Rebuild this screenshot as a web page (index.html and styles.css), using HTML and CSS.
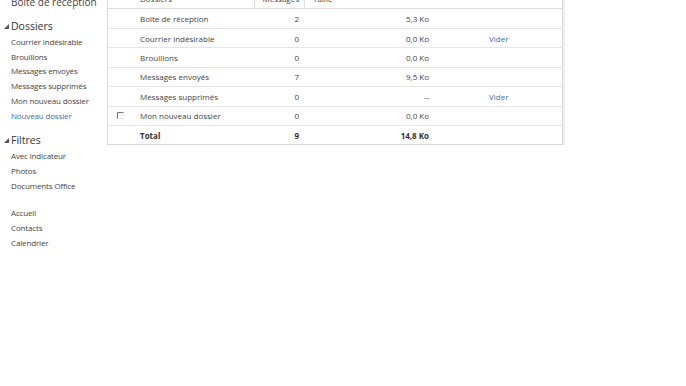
FILE: index.html
```html
<!DOCTYPE html>
<html lang="fr">
<head>
<meta charset="utf-8">
<link rel="stylesheet" href="styles.css">
</head>
<body>
<div class="page">
  <nav class="side">
    <div class="inbox">Boîte de réception</div>
    <div class="group">
      <div class="group-title"><svg class="tri" width="5" height="5" viewBox="0 0 5 5"><polygon points="5,0 5,5 0,5" fill="#555"/></svg>Dossiers</div>
      <a class="item">Courrier indésirable</a>
      <a class="item">Brouillons</a>
      <a class="item">Messages envoyés</a>
      <a class="item">Messages supprimés</a>
      <a class="item">Mon nouveau dossier</a>
      <a class="item link">Nouveau dossier</a>
    </div>
    <div class="group">
      <div class="group-title"><svg class="tri" width="5" height="5" viewBox="0 0 5 5"><polygon points="5,0 5,5 0,5" fill="#555"/></svg>Filtres</div>
      <a class="item">Avec indicateur</a>
      <a class="item">Photos</a>
      <a class="item">Documents Office</a>
    </div>
    <div class="group plain">
      <a class="item">Accueil</a>
      <a class="item">Contacts</a>
      <a class="item">Calendrier</a>
    </div>
  </nav>
  <section class="table">
    <div class="row head">
      <div class="c-chk"></div>
      <div class="c-name">Dossiers</div>
      <div class="c-num sep">Messages</div>
      <div class="c-size sep">Taille</div>
      <div class="c-act"></div>
    </div>
    <div class="row">
      <div class="c-chk"></div><div class="c-name">Boîte de réception</div><div class="c-num">2</div><div class="c-size">5,3 Ko</div><div class="c-act"></div>
    </div>
    <div class="row">
      <div class="c-chk"></div><div class="c-name">Courrier indésirable</div><div class="c-num">0</div><div class="c-size">0,0 Ko</div><div class="c-act"><a class="link">Vider</a></div>
    </div>
    <div class="row">
      <div class="c-chk"></div><div class="c-name">Brouillons</div><div class="c-num">0</div><div class="c-size">0,0 Ko</div><div class="c-act"></div>
    </div>
    <div class="row">
      <div class="c-chk"></div><div class="c-name">Messages envoyés</div><div class="c-num">7</div><div class="c-size">9,5 Ko</div><div class="c-act"></div>
    </div>
    <div class="row">
      <div class="c-chk"></div><div class="c-name">Messages supprimés</div><div class="c-num">0</div><div class="c-size">--</div><div class="c-act"><a class="link">Vider</a></div>
    </div>
    <div class="row">
      <div class="c-chk"><span class="box"></span></div><div class="c-name">Mon nouveau dossier</div><div class="c-num">0</div><div class="c-size">0,0 Ko</div><div class="c-act"></div>
    </div>
    <div class="row total">
      <div class="c-chk"></div><div class="c-name">Total</div><div class="c-num">9</div><div class="c-size">14,8 Ko</div><div class="c-act"></div>
    </div>
  </section>
</div>
</body>
</html>
```
FILE: styles.css
```css
html, body {
  margin: 0;
  padding: 0;
  background: #fff;
}
body {
  font-family: "Open Sans", "DejaVu Sans", sans-serif;
  font-size: 8px;
  color: #444;
  overflow: hidden;
  height: 386px;
}
.page {
  display: flex;
  align-items: flex-start;
}
.side {
  width: 107px;
  flex: none;
  padding-left: 11px;
  box-sizing: border-box;
  margin-top: -5px;
}
.inbox {
  font-size: 10px;
  line-height: 14px;
  color: #444;
}
.group {
  display: flex;
  flex-direction: column;
  margin-top: 10px;
}
.group + .group { margin-top: 10px; }
.group.plain { margin-top: 13px; }
.group-title {
  position: relative;
  font-size: 10.5px;
  line-height: 14px;
  color: #333;
  margin-bottom: 2px;
}
.tri {
  position: absolute;
  left: -7px;
  top: 5px;
}
.item {
  line-height: 14.7px;
  color: #444;
  white-space: nowrap;
  letter-spacing: -0.15px;
}
.link { color: #3a6eb5; }
.table {
  width: 456px;
  box-sizing: border-box;
  border: 1px solid #d8d8d8;
  border-top: none;
  margin-top: -11px;
  box-shadow: 2px 0 0 #f0f0f0;
}
.row {
  display: grid;
  grid-template-columns: 23px 123px 50px 130px 1fr;
  height: 19.43px;
  align-items: center;
  border-top: 1px solid #e6e6e6;
  box-sizing: border-box;
}
.row.head {
  border-top: none;
  height: 19.5px;
  border-bottom: 1px solid #dcdcdc;
}
.row.head + .row { border-top: none; }
.row > div {
  height: 100%;
  display: flex;
  align-items: center;
  box-sizing: border-box;
}
.c-name { padding-left: 9px; }
.c-num { justify-content: flex-end; padding-right: 5px; }
.c-size { justify-content: flex-end; padding-right: 5px; }
.head .c-size { justify-content: flex-start; padding-left: 8px; }
.head .sep { border-left: 1px solid #dcdcdc; }
.c-act { padding-left: 55px; }
.c-chk { justify-content: flex-end; padding-right: 7px; }
.box {
  width: 5px;
  height: 5px;
  border-top: 1px solid #777;
  border-left: 1px solid #777;
  border-right: 1px solid #eee;
  border-bottom: 1px solid #eee;
  margin-right: 0;
}
.total { font-weight: bold; color: #333; }
```
